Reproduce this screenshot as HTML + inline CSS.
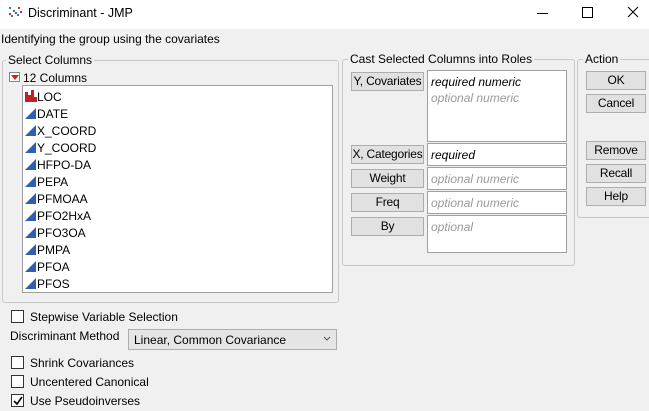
<!DOCTYPE html>
<html><head><style>
*{margin:0;padding:0;box-sizing:border-box}
body{width:649px;height:411px;background:#f0f0f0;font-family:"Liberation Sans",sans-serif;font-size:12px;color:#000;position:relative;overflow:hidden}
.a{position:absolute;white-space:nowrap}
.grp{position:absolute;border:1px solid #c8c8c8;border-radius:3px}
.leg{position:absolute;background:#f0f0f0;padding:0 2px;line-height:14px}
.btn{position:absolute;background:#e1e1e1;border:1px solid #adadad;text-align:center;line-height:17px;white-space:nowrap;overflow:hidden;letter-spacing:-0.2px}
.box{position:absolute;background:#fff;border:1px solid #a0a0a0;padding:3px 3px;font-style:italic;line-height:16px}
.g{color:#9a9a9a}
.cb{position:absolute;width:13px;height:13px;border:1px solid #333;background:#fff}
.it{position:absolute;left:37px;line-height:14px;top:1px}
.ic{position:absolute;left:25px;width:0;height:0;border-left:11px solid transparent;border-bottom:11px solid #2f5fae}
</style></head><body>
<div class="a" style="left:0;top:0;width:649px;height:29px;background:#fff"></div>
<svg class="a" style="left:8px;top:5px" width="14" height="14"><g fill="#3a6fc4"><rect x="1" y="2" width="2" height="2"/><rect x="5" y="5" width="2" height="2"/><rect x="9" y="9" width="2" height="2"/><rect x="3" y="10" width="2" height="2"/><rect x="7" y="7" width="2" height="2"/></g><g fill="#d03030"><rect x="10" y="2" width="2" height="2"/><rect x="12" y="6" width="2" height="2"/><rect x="1" y="8" width="2" height="2"/></g></svg>
<div class="a" style="left:28px;top:6px;font-size:12.5px">Discriminant - JMP</div>
<div class="a" style="left:537px;top:13px;width:11px;height:1px;background:#000"></div>
<div class="a" style="left:582px;top:7px;width:11px;height:11px;border:1px solid #000"></div>
<svg class="a" style="left:627px;top:6px" width="12" height="12"><path d="M1 1L11 11M11 1L1 11" stroke="#000" stroke-width="1"/></svg>
<div class="a" style="left:1px;top:32px">Identifying the group using the covariates</div>

<div class="grp" style="left:2px;top:60px;width:337px;height:243px"></div>
<div class="leg" style="left:6px;top:53px">Select Columns</div>
<div class="a" style="left:9px;top:72px;width:11px;height:10px;border:1px solid #888;background:#fff"></div>
<div class="a" style="left:11px;top:75px;width:0;height:0;border-left:4px solid transparent;border-right:4px solid transparent;border-top:5px solid #d02020"></div>
<div class="a" style="left:23px;top:71px">12 Columns</div>
<div class="a" style="left:22px;top:85px;width:311px;height:208px;background:#fff;border:1px solid #a0a0a0"></div>
<svg class="a" style="left:25px;top:90px" width="12" height="12"><g fill="#c02020"><rect x="0" y="2" width="3" height="10"/><rect x="3" y="5" width="3" height="7"/><rect x="6" y="0" width="3" height="12"/><rect x="9" y="7" width="3" height="5"/></g></svg>
<div class="it" style="top:90px">LOC</div>
<div class="ic" style="top:108px"></div><div class="it" style="top:107px">DATE</div>
<div class="ic" style="top:125px"></div><div class="it" style="top:124px">X_COORD</div>
<div class="ic" style="top:142px"></div><div class="it" style="top:141px">Y_COORD</div>
<div class="ic" style="top:159px"></div><div class="it" style="top:158px">HFPO-DA</div>
<div class="ic" style="top:176px"></div><div class="it" style="top:175px">PEPA</div>
<div class="ic" style="top:193px"></div><div class="it" style="top:192px">PFMOAA</div>
<div class="ic" style="top:210px"></div><div class="it" style="top:209px">PFO2HxA</div>
<div class="ic" style="top:227px"></div><div class="it" style="top:226px">PFO3OA</div>
<div class="ic" style="top:244px"></div><div class="it" style="top:243px">PMPA</div>
<div class="ic" style="top:261px"></div><div class="it" style="top:260px">PFOA</div>
<div class="ic" style="top:278px"></div><div class="it" style="top:277px">PFOS</div>

<div class="grp" style="left:342px;top:59px;width:233px;height:207px"></div>
<div class="leg" style="left:348px;top:52px">Cast Selected Columns into Roles</div>
<div class="btn" style="left:351px;top:72px;width:73px;height:19px">Y, Covariates</div>
<div class="box" style="left:427px;top:70px;width:140px;height:72px">required numeric<br><span class="g">optional numeric</span></div>
<div class="btn" style="left:351px;top:145px;width:73px;height:19px">X, Categories</div>
<div class="box" style="left:427px;top:143px;width:140px;height:23px">required</div>
<div class="btn" style="left:351px;top:169px;width:73px;height:19px">Weight</div>
<div class="box g" style="left:427px;top:167px;width:140px;height:23px">optional numeric</div>
<div class="btn" style="left:351px;top:193px;width:73px;height:19px">Freq</div>
<div class="box g" style="left:427px;top:191px;width:140px;height:23px">optional numeric</div>
<div class="btn" style="left:351px;top:217px;width:73px;height:19px">By</div>
<div class="box g" style="left:427px;top:215px;width:140px;height:38px">optional</div>

<div class="grp" style="left:577px;top:59px;width:80px;height:159px"></div>
<div class="leg" style="left:583px;top:52px">Action</div>
<div class="btn" style="left:586px;top:71px;width:60px;height:19px">OK</div>
<div class="btn" style="left:586px;top:94px;width:60px;height:19px">Cancel</div>
<div class="btn" style="left:586px;top:141px;width:60px;height:19px">Remove</div>
<div class="btn" style="left:586px;top:164px;width:60px;height:19px">Recall</div>
<div class="btn" style="left:586px;top:187px;width:60px;height:19px">Help</div>

<div class="cb" style="left:11px;top:310px"></div>
<div class="a" style="left:30px;top:310px">Stepwise Variable Selection</div>
<div class="a" style="left:10px;top:329px">Discriminant Method</div>
<div class="a" style="left:128px;top:329px;width:209px;height:21px;background:#e5e5e5;border:1px solid #adadad;padding:3px 0 0 5px">Linear, Common Covariance</div>
<svg class="a" style="left:323px;top:336px" width="8" height="6"><path d="M1 1L4 4L7 1" stroke="#555" fill="none"/></svg>
<div class="cb" style="left:11px;top:356px"></div>
<div class="a" style="left:30px;top:356px">Shrink Covariances</div>
<div class="cb" style="left:11px;top:375px"></div>
<div class="a" style="left:30px;top:375px">Uncentered Canonical</div>
<div class="cb" style="left:11px;top:394px"></div>
<svg class="a" style="left:12px;top:395px" width="12" height="12"><path d="M2 6L5 9L10 2" stroke="#000" stroke-width="1.6" fill="none"/></svg>
<div class="a" style="left:30px;top:394px">Use Pseudoinverses</div>
</body></html>
